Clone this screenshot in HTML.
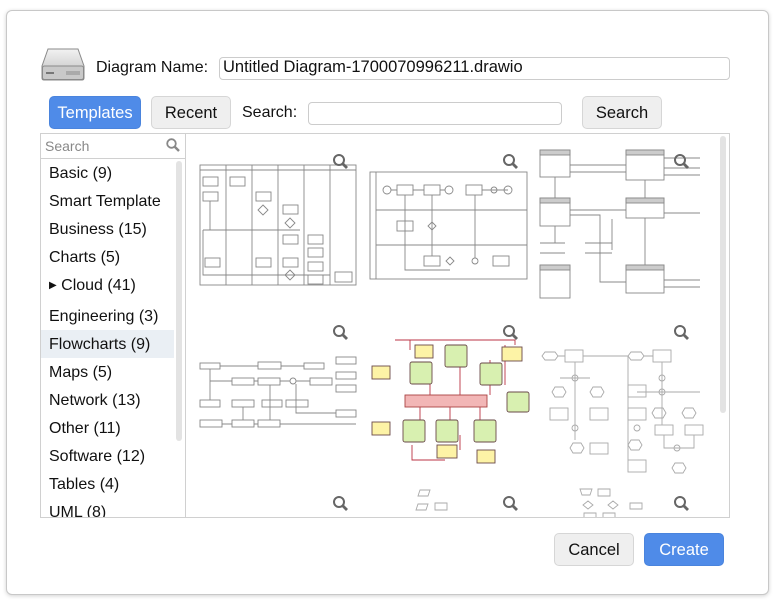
<!DOCTYPE html>
<html><head><meta charset="utf-8"><style>
*{box-sizing:border-box;margin:0;padding:0}
body{width:774px;height:600px;background:#fff;font-family:"Liberation Sans",Arial,sans-serif;position:relative;overflow:hidden;color:#111}
.dlg{position:absolute;left:6px;top:10px;width:763px;height:585px;border:1px solid #c8c8c8;border-radius:6px;box-shadow:0 1px 4px rgba(0,0,0,.18);background:#fff}
.a{position:absolute}
.btn{position:absolute;border-radius:5px;font-size:16.5px;text-align:center;line-height:33px;height:33px}
.gray{background:#efefef;border:1px solid #d6d6d6;color:#111}
.blue{background:#4f8be8;color:#fff;border:1px solid #4a84dd}
.inp{position:absolute;border:1px solid #ccc;border-radius:4px;background:#fff}
.list div{position:absolute;left:8px;font-size:16px;white-space:nowrap}
</style></head><body>
<div class="dlg"></div>
<svg class="a" style="left:40px;top:46px" width="46" height="36" viewBox="0 0 46 36">
<defs><linearGradient id="g" x1="0" y1="0" x2="0" y2="1"><stop offset="0" stop-color="#f2f2f2"/><stop offset="1" stop-color="#bdbdbd"/></linearGradient></defs>
<path d="M8 3 H38 L44 20 V32 Q44 34 42 34 H4 Q2 34 2 32 V20 Z" fill="url(#g)" stroke="#8a8a8a"/>
<rect x="2.5" y="20" width="41" height="13.5" rx="2" fill="#c9c9c9" stroke="#8a8a8a"/>
<rect x="6" y="26" width="8" height="2" fill="#777"/><rect x="26" y="25" width="14" height="4" fill="#aaa"/>
</svg>
<div class="a" style="left:96px;top:59px;font-size:16px">Diagram Name:</div>
<div class="inp" style="left:219px;top:57px;width:511px;height:23px"></div>
<div class="a" style="left:223px;top:58px;font-size:16.5px">Untitled Diagram-1700070996211.drawio</div>
<div class="btn blue" style="left:49px;top:96px;width:92px">Templates</div>
<div class="btn gray" style="left:151px;top:96px;width:80px">Recent</div>
<div class="a" style="left:242px;top:104px;font-size:16px">Search:</div>
<div class="inp" style="left:308px;top:102px;width:254px;height:23px"></div>
<div class="btn gray" style="left:582px;top:96px;width:80px">Search</div>
<div class="a" style="left:40px;top:133px;width:146px;height:385px;border:1px solid #d0d0d0;overflow:hidden">
 <div class="a" style="left:0;top:0;width:144px;height:25px;border-bottom:1px solid #d0d0d0"></div>
 <div class="a" style="left:4px;top:4px;font-size:14px;color:#888">Search</div>
 <svg class="a" style="left:125px;top:4px" width="14" height="14"><circle cx="5.5" cy="5.5" r="4.3" fill="none" stroke="#888" stroke-width="1.8"/><line x1="8.6" y1="8.6" x2="13" y2="13" stroke="#888" stroke-width="2.4"/></svg>
 <div class="a" style="left:0;top:196px;width:133px;height:28px;background:#eaeff4"></div>
 <div class="a" style="left:135px;top:27px;width:6px;height:280px;border-radius:3px;background:#e3e3e3"></div>
 <div class="list">
  <div style="top:31px">Basic (9)</div>
  <div style="top:59px">Smart Template</div>
  <div style="top:87px">Business (15)</div>
  <div style="top:115px">Charts (5)</div>
  <div style="top:143px"><span style="font-size:10px;position:relative;top:-2px">▶</span> Cloud (41)</div>
  <div style="top:174px">Engineering (3)</div>
  <div style="top:202px">Flowcharts (9)</div>
  <div style="top:230px">Maps (5)</div>
  <div style="top:258px">Network (13)</div>
  <div style="top:286px">Other (11)</div>
  <div style="top:314px">Software (12)</div>
  <div style="top:342px">Tables (4)</div>
  <div style="top:370px">UML (8)</div>
 </div>
</div>
<div class="a" style="left:185px;top:133px;width:545px;height:385px;border:1px solid #d0d0d0;overflow:hidden">
<svg class="a" style="left:0;top:0" width="543" height="383" viewBox="186 134 543 383">
<g fill="none" stroke="#888" stroke-width="0.9">
 <rect x="200" y="165" width="156" height="120"/>
 <line x1="200" y1="170" x2="356" y2="170"/>
 <line x1="226" y1="165" x2="226" y2="285"/><line x1="252" y1="165" x2="252" y2="285"/><line x1="278" y1="165" x2="278" y2="285"/><line x1="304" y1="165" x2="304" y2="285"/><line x1="330" y1="165" x2="330" y2="285"/>
 <rect x="203" y="177" width="15" height="9"/><rect x="230" y="177" width="15" height="9"/><rect x="203" y="192" width="15" height="9"/><rect x="256" y="192" width="15" height="9"/>
 <path d="M263 205 l5 5 -5 5 -5 -5z"/><rect x="283" y="205" width="15" height="9"/><path d="M290 218 l5 5 -5 5 -5 -5z"/>
 <rect x="283" y="235" width="15" height="9"/><rect x="308" y="235" width="15" height="9"/><rect x="308" y="248" width="15" height="9"/>
 <rect x="205" y="258" width="15" height="9"/><rect x="256" y="258" width="15" height="9"/><rect x="283" y="258" width="15" height="9"/><rect x="308" y="262" width="15" height="9"/>
 <path d="M290 270 l5 5 -5 5 -5 -5z"/><rect x="308" y="275" width="15" height="9"/><rect x="335" y="272" width="17" height="10"/>
 <path d="M210 201 V230 M203 230 H300 M203 230 V275 H330"/>
 <rect x="370" y="172" width="157" height="107"/>
 <line x1="376" y1="172" x2="376" y2="279"/>
 <line x1="376" y1="210" x2="527" y2="210"/><line x1="376" y1="245" x2="527" y2="245"/>
 <circle cx="387" cy="190" r="4"/><rect x="397" y="185" width="16" height="10"/><rect x="424" y="185" width="16" height="10"/><circle cx="449" cy="190" r="4"/><rect x="466" y="185" width="16" height="10"/><circle cx="494" cy="190" r="3"/><circle cx="508" cy="190" r="4"/>
 <rect x="397" y="221" width="16" height="10"/><path d="M432 222 l4 4 -4 4 -4 -4z"/>
 <rect x="424" y="256" width="16" height="10"/><path d="M450 257 l4 4 -4 4 -4 -4z"/><circle cx="475" cy="261" r="3"/><rect x="493" y="256" width="16" height="10"/>
 <path d="M405 195 V270 H450 M432 195 V256 M475 195 V258 M391 190 H397 M413 190 H424 M440 190 H445 M482 190 H508"/>
 <rect x="540" y="150" width="30" height="27"/><rect x="540" y="150" width="30" height="5" fill="#ccc"/>
 <rect x="626" y="150" width="38" height="30"/><rect x="626" y="150" width="38" height="5" fill="#ccc"/>
 <rect x="540" y="198" width="30" height="28"/><rect x="540" y="198" width="30" height="5" fill="#ccc"/>
 <rect x="626" y="198" width="38" height="20"/><rect x="626" y="198" width="38" height="5" fill="#ccc"/>
 <rect x="540" y="265" width="30" height="33"/><rect x="540" y="265" width="30" height="5" fill="#ccc"/>
 <rect x="626" y="265" width="38" height="28"/><rect x="626" y="265" width="38" height="5" fill="#ccc"/>
 <path d="M540 243 H565 M540 253 H565 M585 243 H612 M585 253 H612 M570 165 H626 M570 172 H626 M664 158 H700 M664 168 H700 M664 175 H700 M570 210 H626 M664 213 H700 M612 219 V250 M570 215 H600 V282 H626 M664 280 H700 M664 287 H700 M645 180 V198 M645 218 V265 M555 177 V198 M555 226 V243"/>
 <rect x="200" y="363" width="20" height="6"/><rect x="258" y="362" width="23" height="7"/><rect x="304" y="363" width="20" height="6"/><rect x="336" y="357" width="20" height="7"/>
 <rect x="232" y="378" width="22" height="7"/><rect x="258" y="378" width="22" height="7"/><circle cx="293" cy="381" r="3"/><rect x="310" y="378" width="22" height="7"/><rect x="336" y="372" width="20" height="7"/><rect x="336" y="385" width="20" height="7"/>
 <rect x="200" y="400" width="20" height="7"/><rect x="232" y="400" width="22" height="7"/><rect x="262" y="400" width="20" height="7"/><rect x="286" y="400" width="22" height="7"/><rect x="336" y="410" width="20" height="7"/>
 <rect x="200" y="420" width="22" height="7"/><rect x="232" y="420" width="22" height="7"/><rect x="258" y="420" width="22" height="7"/>
 <path d="M220 366 H258 M281 366 H304 M210 369 V400 M210 381 H232 M254 381 H258 M280 381 H290 M296 381 H310 M270 385 V420 M243 407 V420 M222 424 H232 M254 424 H258 M280 424 H356 M296 384 V413 H336"/>
</g>
<g stroke="#6a4a4a" stroke-width="0.9">
 <path d="M395 340 H515 V345 M505 345 V385 M410 340 V350 M430 365 V395 M460 355 V395 M490 360 V395 M420 403 V440 M450 403 V440 M480 403 V440 M412 445 V460 H445 M460 435 V450" fill="none" stroke="#b34"/>
 <rect x="405" y="395" width="82" height="12" fill="#f2b6b6" stroke="#a44"/>
 <rect x="415" y="345" width="18" height="13" fill="#fdf3a6"/><rect x="372" y="366" width="18" height="13" fill="#fdf3a6"/><rect x="372" y="422" width="18" height="13" fill="#fdf3a6"/><rect x="502" y="347" width="20" height="14" fill="#fdf3a6"/><rect x="437" y="445" width="20" height="13" fill="#fdf3a6"/><rect x="477" y="450" width="18" height="13" fill="#fdf3a6"/>
 <rect x="410" y="362" width="22" height="22" rx="2" fill="#d8f0b0"/><rect x="445" y="345" width="22" height="22" rx="2" fill="#d8f0b0"/><rect x="480" y="363" width="22" height="22" rx="2" fill="#d8f0b0"/><rect x="507" y="392" width="22" height="20" rx="2" fill="#d8f0b0"/>
 <rect x="403" y="420" width="22" height="22" rx="2" fill="#d8f0b0"/><rect x="436" y="420" width="22" height="22" rx="2" fill="#d8f0b0"/><rect x="474" y="420" width="22" height="22" rx="2" fill="#d8f0b0"/>
</g>
<g fill="none" stroke="#aaa" stroke-width="0.9">
 <path d="M542 356 l3 -4 h10 l3 4 -3 4 h-10z"/><rect x="565" y="350" width="18" height="12"/><path d="M628 356 l3 -4 h10 l3 4 -3 4 h-10z"/><rect x="653" y="350" width="18" height="12"/>
 <circle cx="575" cy="378" r="3"/><circle cx="662" cy="378" r="3"/>
 <path d="M552 392 l3 -5 h8 l3 5 -3 5 h-8z"/><path d="M590 392 l3 -5 h8 l3 5 -3 5 h-8z"/><rect x="628" y="385" width="18" height="12"/><circle cx="662" cy="392" r="3"/>
 <rect x="550" y="408" width="18" height="12"/><rect x="590" y="408" width="18" height="12"/><rect x="628" y="408" width="18" height="12"/><path d="M652 413 l3 -5 h8 l3 5 -3 5 h-8z"/><path d="M682 413 l3 -5 h8 l3 5 -3 5 h-8z"/>
 <circle cx="575" cy="428" r="3"/><circle cx="637" cy="428" r="3"/><rect x="655" y="425" width="18" height="10"/><rect x="685" y="425" width="18" height="10"/>
 <path d="M570 448 l3 -5 h8 l3 5 -3 5 h-8z"/><rect x="590" y="443" width="18" height="11"/><path d="M628 445 l3 -5 h8 l3 5 -3 5 h-8z"/><circle cx="677" cy="448" r="3"/>
 <rect x="628" y="460" width="18" height="12"/><path d="M672 468 l3 -5 h8 l3 5 -3 5 h-8z"/>
 <path d="M558 356 H565 M583 356 H628 V460 M575 362 V440 M560 378 H590 M644 356 H653 M662 362 V425 M637 392 H700 M664 435 V448 H694 V435"/>
 <path d="M420 490 h10 l-2 6 h-10z M418 504 h10 l-2 6 h-10z M435 503 h12 v7 h-12z M580 489 h12 l-2 6 h-8z M598 489 h12 v7 h-12z M583 505 l5 -4 5 4 -5 4z M608 505 l5 -4 5 4 -5 4z M630 503 h12 v6 h-12z M584 513 h12 v6 h-12z M603 513 h12 v6 h-12z"/>
</g>
<g fill="none" stroke="#666" stroke-width="2">
 <circle cx="339" cy="160" r="5"/><line x1="343" y1="164" x2="347" y2="168" stroke-width="2.8"/>
 <circle cx="509" cy="160" r="5"/><line x1="513" y1="164" x2="517" y2="168" stroke-width="2.8"/>
 <circle cx="680" cy="160" r="5"/><line x1="684" y1="164" x2="688" y2="168" stroke-width="2.8"/>
 <circle cx="339" cy="331" r="5"/><line x1="343" y1="335" x2="347" y2="339" stroke-width="2.8"/>
 <circle cx="509" cy="331" r="5"/><line x1="513" y1="335" x2="517" y2="339" stroke-width="2.8"/>
 <circle cx="680" cy="331" r="5"/><line x1="684" y1="335" x2="688" y2="339" stroke-width="2.8"/>
 <circle cx="339" cy="502" r="5"/><line x1="343" y1="506" x2="347" y2="510" stroke-width="2.8"/>
 <circle cx="509" cy="502" r="5"/><line x1="513" y1="506" x2="517" y2="510" stroke-width="2.8"/>
 <circle cx="680" cy="502" r="5"/><line x1="684" y1="506" x2="688" y2="510" stroke-width="2.8"/>
</g>
</svg>
<div class="a" style="left:534px;top:2px;width:6px;height:277px;border-radius:3px;background:#e3e3e3"></div>
</div>
<div class="btn gray" style="left:554px;top:533px;width:80px">Cancel</div>
<div class="btn blue" style="left:644px;top:533px;width:80px">Create</div>
</body></html>
